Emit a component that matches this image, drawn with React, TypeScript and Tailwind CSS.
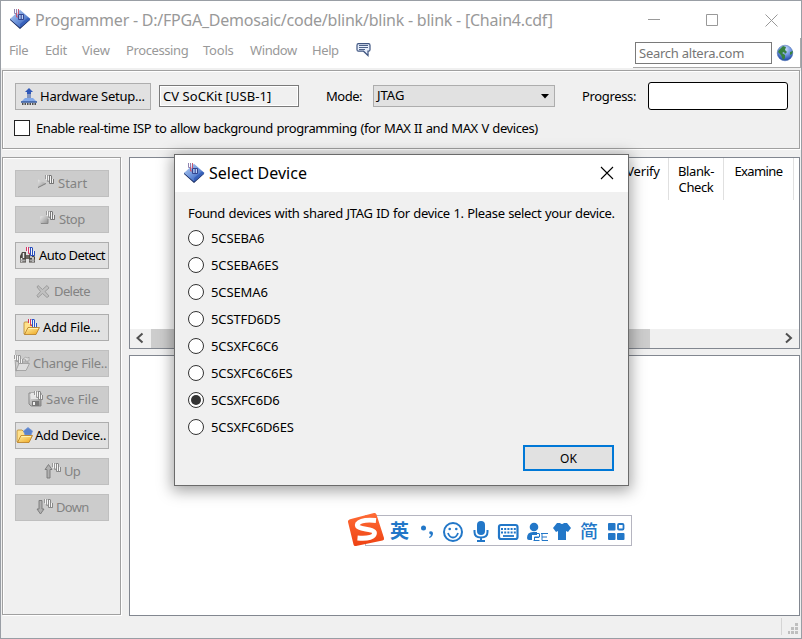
import React from "react";

const sans = "font-['Noto_Sans','Noto_Sans_CJK_SC',sans-serif]";

function Waves({ x, y, color, accent }: { x: number; y: number; color: string; accent: string }) {
  return (
    <g transform={`translate(${x} ${y})`} fill="none" strokeWidth="1">
      <path d="M1.500 0v5M3.500 0v5M5.500 0v5" stroke="#f4f4f4" />
      <path d="M.5 0v4M2.500 0v6.500h2M4.500 4v2.500" stroke={accent} />
      <path d="M4.500 0v8.500h4V4M6.500 1v7.500M3.500 .5h3M8.500 4v4.500" stroke={color} />
      <path d="M5.500 3v5M7.500 4v4" stroke="#f4f4f4" />
    </g>
  );
}

function AppIcon() {
  return (
    <svg width="21" height="21" viewBox="0 0 21 21" className="shrink-0">
      <defs>
        <linearGradient id="chip" x1="0" y1="0" x2="1" y2="1">
          <stop offset="0" stopColor="#c2d8f4" />
          <stop offset=".5" stopColor="#6c93db" />
          <stop offset="1" stopColor="#1d46a2" />
        </linearGradient>
      </defs>
      <path d="M0 11 10 20 20 11V9.500L10 17.500 0 9.500Z" fill="#14265c" />
      <path d="M0 10 10 .8 20.500 10 10 18.800Z" fill="url(#chip)" />
      <path d="M10 18.500 20 10 18 8.500 10 15Z" fill="#2854b4" opacity=".6" />
      <g fill="none" strokeWidth="1">
        <path d="M4.500 0v4.500h3M6.500 0v6" stroke="#8f83b0" />
        <path d="M6.500 4v4h2M8.500 0v8" stroke="#c9576e" />
        <path d="M8.500 6v4.500h5V5.500M11 5v5M8.500 5.500h5" stroke="#34458f" />
        <path d="M7.500 1v4M10 6v4M12.500 6v4" stroke="#e4edff" strokeWidth=".7" />
      </g>
    </svg>
  );
}

type IconName = "start" | "stop" | "detect" | "delete" | "open" | "change" | "save" | "device" | "up" | "down";

function SideIcon({ name }: { name: IconName }) {
  return (
    <svg width="17" height="17" viewBox="0 0 17 17" className="shrink-0">
      <defs>
        <linearGradient id="folder" x1="0" y1="0" x2="1" y2="1">
          <stop offset="0" stopColor="#fff0a8" />
          <stop offset="1" stopColor="#eea51c" />
        </linearGradient>
        <linearGradient id="metal" x1="0" y1="0" x2="1" y2="1">
          <stop offset="0" stopColor="#e6e6e6" />
          <stop offset="1" stopColor="#8d8d8d" />
        </linearGradient>
      </defs>
      {name === "start" && (
        <>
          <path d="M1 4.500 9 8.500 1 13Z" fill="url(#metal)" />
          <path d="m1 12.500 8-4" stroke="#808080" />
          <Waves x={8} y={0} color="#777" accent="#999" />
        </>
      )}
      {name === "stop" && (
        <>
          <rect x="1" y="5" width="8" height="8" rx="1.500" fill="url(#metal)" />
          <path d="M2 12.500h7V8" fill="none" stroke="#888" />
          <Waves x={7} y={0} color="#777" accent="#999" />
        </>
      )}
      {name === "detect" && (
        <>
          <path d="M3 5h4v10.500H1V9ZM11 6h2l3 4v5.500h-6V8Z" fill="#4b4743" />
          <path d="M4.500 6v5M2.500 11v4M12 8v3M14 10v5" stroke="#e8e8e8" strokeWidth="1.500" />
          <path d="M7 8h3v4H7Z" fill="#6d6660" />
          <path d="M1.500 13.500h5M10.500 13.500h5" stroke="#aaa" strokeWidth="2" />
          <Waves x={7} y={0} color="#274dbd" accent="#d43767" />
        </>
      )}
      {name === "delete" && (
        <>
          <path d="m3 2.500 4.500 4L12 2.500l2 2.500-4 3.500 4 4.500-2 1.500-4.500-4L3 14.500 2 12.500l3.500-4L2 4Z" fill="#c0c0c0" stroke="#999" strokeWidth=".9" />
        </>
      )}
      {(name === "open" || name === "device") && (
        <>
          <path d="M1 4q0-1 1-1h4l2 2h5v5L3 15H1Z" fill="#ffe18b" stroke="#b6862b" strokeWidth=".8" />
          {name === "open" ? (
            <Waves x={5} y={0} color="#2854cb" accent="#d43757" />
          ) : (
            <path d="m12 .5 4.500 3.500-1.500 4H9L7.500 4Z" fill="#5b83cc" stroke="#7597d6" strokeWidth=".8" />
          )}
          <path d="M5 8.500h11.500L13 15.500H1.500Z" fill="url(#folder)" stroke="#b67c22" strokeWidth=".8" />
          <path d="M5.500 9.500H15" stroke="#fff3b0" />
        </>
      )}
      {name === "change" && (
        <>
          <path d="M1 5h5l1 2h7v3L2 16Z" fill="#ccc" stroke="#999" strokeWidth=".8" />
          <Waves x={0} y={0} color="#999" accent="#999" />
          <path d="M9 4q2-3 5-1l1-1v4h-4l1-1q-1-1-3-1Z" fill="#ddd" stroke="#999" strokeWidth=".6" />
          <path d="M5 8.500h10.500L12 15.500H2Z" fill="#ddd" stroke="#999" strokeWidth=".8" />
        </>
      )}
      {name === "save" && (
        <>
          <path d="M2 2h12v13H4l-2-2Z" fill="url(#metal)" stroke="#888" />
          <path d="M4 2h8v6H4Z" fill="#e6e6e6" />
          <path d="M5 10h7v5H5Z" fill="#777" />
          <path d="M6 11h2v3H6Z" fill="#eee" />
          <Waves x={7} y={0} color="#888" accent="#999" />
        </>
      )}
      {name === "up" && (
        <>
          <path d="M4.500 1.500 8 6.500H6V15H3V6.500H1Z" fill="#b0b0b0" stroke="#777" strokeWidth=".9" />
          <Waves x={8} y={0} color="#888" accent="#999" />
        </>
      )}
      {name === "down" && (
        <>
          <path d="M3 1.500h3V10h2l-3.500 5L1 10h2Z" fill="#b0b0b0" stroke="#777" strokeWidth=".9" />
          <Waves x={8} y={0} color="#888" accent="#999" />
        </>
      )}
    </svg>
  );
}

const actions: { icon: IconName; label: string; on?: boolean; box: string; text: string }[] = [
  { icon: "start", label: "Start", box: "pl-[21px] gap-[4px]", text: "" },
  { icon: "stop", label: "Stop", box: "pl-[23px] gap-[3px]", text: "tracking-[-0.5px]" },
  { icon: "detect", label: "Auto Detect", on: true, box: "pl-[3px] gap-[3px]", text: "tracking-[-0.55px]" },
  { icon: "delete", label: "Delete", box: "pl-[19px] gap-[2px]", text: "tracking-[-0.6px]" },
  { icon: "open", label: "Add File...", on: true, box: "pl-[7px] gap-[3px]", text: "tracking-[-0.15px]" },
  { icon: "change", label: "Change File..", box: "-ml-[2px] gap-[2px]", text: "tracking-[-0.3px]" },
  { icon: "save", label: "Save File", box: "pl-[11px] gap-[2px]", text: "" },
  { icon: "device", label: "Add Device..", on: true, box: "gap-[2px]", text: "tracking-[-0.3px]" },
  { icon: "up", label: "Up", box: "pl-[28px] gap-[3px]", text: "tracking-[-0.8px]" },
  { icon: "down", label: "Down", box: "pl-[20px] gap-[3px]", text: "tracking-[-0.7px]" },
];

const devices = ["5CSEBA6", "5CSEBA6ES", "5CSEMA6", "5CSTFD6D5", "5CSXFC6C6", "5CSXFC6C6ES", "5CSXFC6D6", "5CSXFC6D6ES"];

function TitleBar() {
  return (
    <header className="flex h-[37px] shrink-0 items-center bg-white pl-[9px] text-[#999]">
      <AppIcon />
      <h1 className="ml-[4px] w-[520px] text-[16px] leading-[20px] tracking-[-0.23px] whitespace-nowrap">
        Programmer - D:/FPGA_Demosaic/code/blink/blink - blink - [Chain4.cdf]
      </h1>
      <svg width="140" height="20" viewBox="0 0 140 20" className="ml-[88px] shrink-0" fill="none" stroke="#999">
        <path d="M5 9.500h12M63.500 4.500h11v11h-11zM122.500 4.500l12 12M134.500 4.500l-12 12" />
      </svg>
    </header>
  );
}

function MenuBar() {
  return (
    <nav className="flex h-[30px] shrink-0 bg-white pl-[8px] text-[13px] leading-[24px] tracking-[-0.4px] text-[#999]">
      <span className="w-[36px]">File</span>
      <span className="w-[37px]">Edit</span>
      <span className="w-[44px] tracking-[-0.2px]">View</span>
      <span className="w-[77px]">Processing</span>
      <span className="w-[47px] tracking-[-0.2px]">Tools</span>
      <span className="w-[62px]">Window</span>
      <span className="w-[44px]">Help</span>
      <svg width="15" height="14" viewBox="0 0 15 14" className="mt-[5px]">
        <path d="M2.500 .7h10q1.500 0 1.500 1.500v4.500q0 1.500-1.500 1.500H12v4.300L7.500 8.200h-5Q1 8.200 1 6.700V2.200Q1 .7 2.500 .7Z" fill="#e6eefc" stroke="#3f5580" strokeWidth="1.200" />
        <path d="M3 2.500h9M3 4.500h9M3 6.500h6" stroke="#4d6288" />
      </svg>
      <div className="ml-auto flex w-[168px] border-r border-b border-[#aaa] pt-[4px] pl-[2px]">
        <div className="h-[22px] w-[137px] border border-[#7a7a7a] pl-[3px] leading-[20px] tracking-[-0.25px] text-[#767676]">Search altera.com</div>
        <svg width="18" height="18" viewBox="0 0 18 18" className="mt-[2px] ml-[4px]">
          <defs>
            <radialGradient id="globe" cx=".5" cy=".25" r=".7">
              <stop offset="0" stopColor="#d3e3ff" />
              <stop offset=".5" stopColor="#7b9ee5" />
              <stop offset="1" stopColor="#234eac" />
            </radialGradient>
          </defs>
          <circle cx="9" cy="9" r="7.800" fill="url(#globe)" stroke="#476bab" strokeWidth=".5" />
          <path d="m3 6 4-4 3 1-1 3 2 2-2 2-1-2-2 1 3 2v3l-2 2-2-5-3-3ZM14 8l3-1-1 3-2 1Z" fill="#37823f" />
        </svg>
      </div>
    </nav>
  );
}

function SetupPanel() {
  return (
    <section className="mx-[1px] mt-[2px] h-[79px] w-[798px] shrink-0 border border-[#a0a0a0] p-[1px] shadow-[inset_1px_1px_0_#fff,1px_1px_0_#fff]">
      <div className="mt-[10px] flex h-[28px] items-center pl-[11px] text-[13px]">
        <button className="flex h-[27px] w-[136px] items-center border border-[#adadad] bg-[#e1e1e1] pl-[5px] whitespace-nowrap">
          <svg width="16" height="17" viewBox="0 0 16 17" className="mr-[3px] shrink-0">
            <path d="M8 0 4 4h2v2h4V4h2Z" fill="#3159b8" />
            <path d="M6 7h4M6 9h4" stroke="#274a9c" />
            <path d="M4 10h8l4 4H0Z" fill="#84aae9" />
            <path d="M0 14h16" stroke="#34589c" strokeWidth="1.500" />
            <path d="M1 16h14" stroke="#222" strokeWidth="1.500" strokeDasharray="1.500 1" />
          </svg>
          <span className="pt-[2px] tracking-[-0.25px]">Hardware Setup...</span>
        </button>
        <div className="ml-[8px] h-[22px] w-[140px] border border-[#7a7a7a] pl-[3px] leading-[20px] tracking-[0.05px] shadow-[inset_0_0_0_1px_#fff]">CV SoCKit [USB-1]</div>
        <span className="ml-[27px] w-[47px] pt-px tracking-[-0.5px]">Mode:</span>
        <div className="flex h-[22px] w-[182px] items-center justify-between border border-[#adadad] bg-[#e1e1e1] pr-[5px] pl-[3px]">
          <span>JTAG</span>
          <svg width="8" height="5"><path d="M0 0h8L4 4.500Z" /></svg>
        </div>
        <span className="ml-[27px] w-[66px] pt-px tracking-[-0.35px]">Progress:</span>
        <div className="h-[28px] w-[140px] rounded-[3px] border border-black bg-white" />
      </div>
      <label className="mt-[10px] flex h-[16px] items-center pl-[10px] text-[13px]">
        <span className="mr-[6px] size-[16px] border border-[#222] bg-white" />
        <span className="pt-[2px] tracking-[-0.41px] whitespace-nowrap [word-spacing:0.6px]">Enable real-time ISP to allow background programming (for MAX II and MAX V devices)</span>
      </label>
    </section>
  );
}

function Sidebar() {
  return (
    <aside className="flex h-[458px] w-[119px] flex-col gap-[9px] border border-[#a0a0a0] pt-[12px] pl-[12px] shadow-[inset_1px_1px_0_#fff,1px_1px_0_#fff]">
      {actions.map((a) => (
        <button
          key={a.label}
          className={`flex h-[27px] w-[94px] shrink-0 items-center border text-[13px] ${a.on ? "border-[#adadad] bg-[#e1e1e1] text-black" : "border-[#bfbfbf] bg-[#ccc] text-[#838383]"}`}
        >
          <span className={`flex items-center text-left whitespace-nowrap ${a.box}`}>
            <SideIcon name={a.icon} />
            <span className={a.text}>{a.label}</span>
          </span>
        </button>
      ))}
    </aside>
  );
}

function Workspace() {
  return (
    <main className="ml-[8px] flex w-[671px] flex-col gap-[6px]">
      <div className="flex h-[192px] flex-col border border-[#828790] bg-white">
        <div className="flex h-[42px] justify-end pr-[5px] text-center text-[13px] leading-[16px] tracking-[-0.4px]">
          <span className="w-[51px] border-r border-[#e0e0e0] pt-[5px] tracking-[-0.2px]">Verify</span>
          <span className="w-[55px] border-r border-[#e0e0e0] pt-[5px]">Blank-<br />Check</span>
          <span className="w-[70px] border-r border-[#e0e0e0] pt-[5px] tracking-[-0.6px]">Examine</span>
        </div>
        <div className="mt-auto flex h-[19px] items-center bg-[#f0f0f0]">
          <svg width="21" height="19" fill="none" stroke="#505050" strokeWidth="2"><path d="m12.500 4.500-5 4.500 5 4.500" /></svg>
          <div className="h-[19px] w-[499px] bg-[#cdcdcd]" />
          <svg width="17" height="19" className="ml-auto" fill="none" stroke="#505050" strokeWidth="2"><path d="m4 4.500 5 4.500-5 4.500" /></svg>
        </div>
      </div>
      <div className="h-[261px] border border-[#828790] bg-white" />
    </main>
  );
}

function SelectDevice() {
  return (
    <div role="dialog" className="absolute top-[153px] left-[173px] h-[332px] w-[455px] border border-[#6b6b6b] bg-[#f0f0f0] text-black shadow-[0_3px_14px_2px_rgba(0,0,0,0.36)]">
      <div className="flex h-[37px] items-center bg-white pl-[9px]">
        <AppIcon />
        <h2 className="ml-[4px] pb-px text-[16px] leading-[20px]">Select Device</h2>
        <svg width="14" height="14" viewBox="0 0 14 14" className="mr-[14px] mb-px ml-auto" fill="none" stroke="#000" strokeWidth="1.100"><path d="m1 1 12 12M13 1 1 13" /></svg>
      </div>
      <p className="mt-[11px] ml-[13px] text-[13px] leading-[20px] tracking-[-0.35px] whitespace-nowrap [word-spacing:0.6px]">
        Found devices with shared JTAG ID for device 1. Please select your device.
      </p>
      <div className="mt-[1px] ml-[13px] flex flex-col text-[13px]">
        {devices.map((d) => (
          <label key={d} className="flex h-[27px] items-center gap-[7px]">
            <span className="flex size-[16px] items-center justify-center rounded-full border border-[#333] bg-white">
              {d === "5CSXFC6D6" && <span className="size-[10px] rounded-full bg-[#333]" />}
            </span>
            <span className="pt-[2px] tracking-[-0.12px]">{d}</span>
          </label>
        ))}
      </div>
      <button className="mt-[5px] ml-[348px] block h-[26px] w-[91px] border-2 border-[#0078d7] bg-[#e1e1e1] text-[12px] leading-[23px]">OK</button>
    </div>
  );
}

function InputMethodBar() {
  return (
    <div className="absolute top-[511px] left-[346px] flex h-[36px] w-[285px] text-[#2277c8]">
      <div className="mt-[3px] ml-[18px] flex h-[31px] w-[267px] items-center border border-[#b5b5c0] bg-white pl-[24px]">
        <span className="w-[29px] pt-px text-[19px] leading-[28px] font-bold">英</span>
        <svg width="212" height="29" viewBox="419 516 212 29" fill="currentColor" className="shrink-0">
          <circle cx="423.500" cy="528" r="2.500" />
          <path d="M429.500 531.500q3-1 3.500 1.500 0 3.500-3.500 5l-.5-1q2-1 2-2.500-2.500-.5-1.500-3Z" />
          <circle cx="453" cy="532" r="9" fill="none" stroke="currentColor" strokeWidth="2" />
          <circle cx="449.700" cy="529" r="1.300" /><circle cx="456.300" cy="529" r="1.300" />
          <path d="M448 533q1.500 4.500 5 4.500t5-4.500" fill="none" stroke="currentColor" strokeWidth="1.800" />
          <rect x="477" y="521" width="8" height="14" rx="4" />
          <path d="M474.500 530v2q0 5.500 6.500 5.500t6.500-5.500v-2M481 537v4M477 541h8" fill="none" stroke="currentColor" strokeWidth="2" />
          <rect x="499" y="525" width="18.500" height="14" rx="2" fill="none" stroke="currentColor" strokeWidth="2.200" />
          <path d="M501 529h15M501 532.500h15" fill="none" stroke="currentColor" strokeWidth="2" strokeDasharray="2 1.200" />
          <path d="M503 536h11" stroke="currentColor" strokeWidth="1.800" />
          <circle cx="534" cy="527" r="4.300" />
          <path d="M527 538q0-6 6-6h4v3h-5v5h-3q-2 0-2-2Z" />
          <path d="M532 533.500h7M534 537.500h5M533.500 540.500h6M539.500 533.500v3.500h-5v3.500M541 533.500h7M542 537h5M542 533.500v7h6" fill="none" stroke="currentColor" strokeWidth="1" />
          <path d="m557 523 3 0q2 2 4 0h3l4 5-3 4-2-1v9h-8v-9l-2 1-3-4Z" />
          <rect x="608" y="523" width="7.500" height="7.500" rx="1" />
          <rect x="618" y="524" width="5.500" height="5.500" rx="1" fill="none" stroke="currentColor" strokeWidth="1.800" />
          <rect x="608" y="533" width="7.500" height="7" rx="1" />
          <rect x="617" y="533" width="7.500" height="7" rx="1" />
        </svg>
        <span className="-ml-[51px] w-[20px] shrink-0 pt-px text-[18px] leading-[28px] font-medium">简</span>
      </div>
      <svg width="38" height="36" viewBox="0 0 38 36" className="absolute top-0 left-0">
        <defs>
          <linearGradient id="sogou" x2="0" y2="1">
            <stop stopColor="#ff6c36" />
            <stop offset="1" stopColor="#ee4212" />
          </linearGradient>
        </defs>
        <path d="M4 7 27 1q2-.5 2.500 1.500L37 26q.5 2-1.500 2.500L9 34q-2 .5-2.500-1.500L1 10q-.5-2 3-3Z" fill="url(#sogou)" />
        <path d="M29 8.500Q14 7 10.500 12c-3 6 17 4 17 9 0 4-6 6-17 5" fill="none" stroke="#fff" strokeWidth="4.800" />
      </svg>
    </div>
  );
}

export default function App() {
  return (
    <div className={`relative flex h-[639px] w-[802px] flex-col overflow-hidden border border-[#999ea5] bg-[#f0f0f0] text-black ${sans}`}>
      <TitleBar />
      <MenuBar />
      <SetupPanel />
      <div className="mt-[8px] ml-[1px] flex h-[459px] shrink-0">
        <Sidebar />
        <Workspace />
      </div>
      <footer className="mt-auto flex h-[20px] justify-end">
        <div className="h-[17px] w-px bg-[#d5d5d5]" />
        <svg width="19" height="18" viewBox="0 0 19 18" fill="#bfbfbf">
          <path d="M13 5h3v3h-3zM9 9h3v3H9zM13 9h3v3h-3zM6 13h2v3H6zM9 13h3v3H9zM13 13h3v3h-3z" />
        </svg>
      </footer>
      <SelectDevice />
      <InputMethodBar />
    </div>
  );
}
